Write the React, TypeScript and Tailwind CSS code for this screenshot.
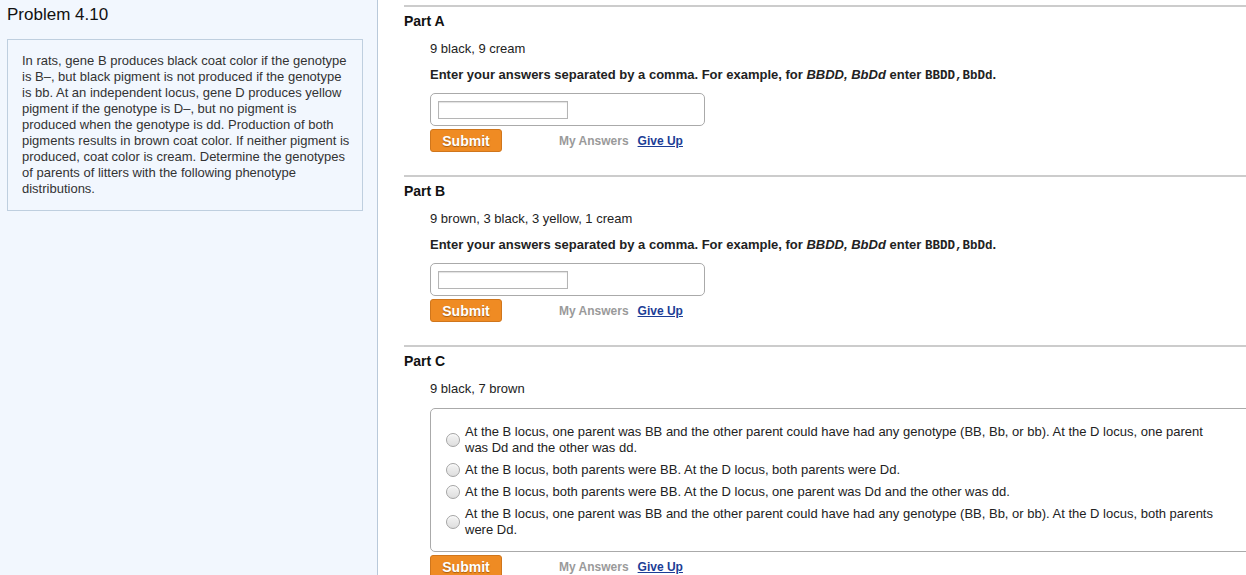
import React from "react";

const font = { fontFamily: '"Liberation Sans", Arial, Helvetica, sans-serif' };

function ActionRow() {
    return (
        <div className="flex items-center">
            <button className="w-[72px] h-[23px] rounded-[3px] border border-[#d0761c] bg-[#ef8b23] text-white text-[14px] font-bold leading-none [text-shadow:0_1px_1px_rgba(120,60,0,0.6)]">
                Submit
            </button>
            <span className="ml-[57px] text-[12px] font-bold text-[#9a9a9a]">My Answers</span>
            <span className="ml-[9px] text-[12px] font-bold text-[#1c3d96] underline">Give Up</span>
        </div>
    );
}

function Example() {
    return (
        <p className="mt-[10px] text-[13px] leading-[16px] font-bold text-[#222]">
            Enter your answers separated by a comma. For example, for <i>BBDD, BbDd</i> enter{" "}
            <span className="font-['Liberation_Mono',monospace] text-[12.5px]">BBDD,BbDd</span>.
        </p>
    );
}

function TextPart({ label, prompt }: { label: string; prompt: string }) {
    return (
        <section>
            <div className="h-[2px] bg-[#cccccc]" />
            <h2 className="mt-[6px] text-[14px] leading-[16px] font-bold text-[#111]">{label}</h2>
            <div className="pl-[26px]">
                <p className="mt-[12px] text-[13px] leading-[16px] text-[#222]">{prompt}</p>
                <Example />
                <div className="mt-[9px] w-[275px] h-[33px] rounded-[5px] border border-[#aaaaaa] pl-[7px] pt-[7px]">
                    <div className="w-[130px] h-[18px] border border-[#b5b5b5] bg-white shadow-[inset_0_1px_1px_rgba(0,0,0,0.12)]" />
                </div>
                <div className="mt-[3px]">
                    <ActionRow />
                </div>
            </div>
        </section>
    );
}

const choices = [
    "At the B locus, one parent was BB and the other parent could have had any genotype (BB, Bb, or bb). At the D locus, one parent was Dd and the other was dd.",
    "At the B locus, both parents were BB. At the D locus, both parents were Dd.",
    "At the B locus, both parents were BB. At the D locus, one parent was Dd and the other was dd.",
    "At the B locus, one parent was BB and the other parent could have had any genotype (BB, Bb, or bb). At the D locus, both parents were Dd.",
];

function Radio() {
    return (
        <span className="shrink-0 w-[14px] h-[14px] rounded-full border border-[#a4a4a4] bg-[linear-gradient(#f4f4f4,#dedede)] shadow-[inset_0_1px_1px_rgba(255,255,255,0.9)]" />
    );
}

export default function App() {
    return (
        <div className="w-[1246px] h-[575px] overflow-hidden flex bg-white" style={font}>
            <aside className="w-[378px] shrink-0 h-full bg-[#f2f7fe] border-r border-[#b9c9da] pl-[7px] pr-[14px]">
                <h1 className="mt-[6px] text-[17px] leading-[18px] text-[#111]">Problem 4.10</h1>
                <div className="mt-[15px] w-[356px] border border-[#bfcfdf] pl-[14px] pr-[10px] pt-[13px] pb-[13px]">
                    <p className="text-[13px] leading-[16px] text-[#333]">
                        In rats, gene B produces black coat color if the genotype is B–, but black pigment is not produced if the
                        genotype is bb. At an independent locus, gene D produces yellow pigment if the genotype is D–, but no
                        pigment is produced when the genotype is dd. Production of both pigments results in brown coat color. If
                        neither pigment is produced, coat color is cream. Determine the genotypes of parents of litters with the
                        following phenotype distributions.
                    </p>
                </div>
            </aside>

            <main className="flex-1 min-w-0 pl-[26px] pt-[5px] flex flex-col gap-[23px]">
                <TextPart label="Part A" prompt="9 black, 9 cream" />
                <TextPart label="Part B" prompt="9 brown, 3 black, 3 yellow, 1 cream" />

                <section>
                    <div className="h-[2px] bg-[#cccccc]" />
                    <h2 className="mt-[6px] text-[14px] leading-[16px] font-bold text-[#111]">Part C</h2>
                    <div className="pl-[26px]">
                        <p className="mt-[12px] text-[13px] leading-[16px] text-[#222]">9 black, 7 brown</p>
                        <div className="mt-[11px] w-[840px] h-[144px] rounded-[5px] border border-[#aaaaaa] pl-[15px] pt-[15px] flex flex-col gap-[6px]">
                            {choices.map((c, i) => (
                                <label key={i} className="flex items-center gap-[5px]">
                                    <Radio />
                                    <span className="w-[750px] text-[13px] leading-[16px] text-[#222]">{c}</span>
                                </label>
                            ))}
                        </div>
                        <div className="mt-[3px]">
                            <ActionRow />
                        </div>
                    </div>
                </section>
            </main>
        </div>
    );
}
